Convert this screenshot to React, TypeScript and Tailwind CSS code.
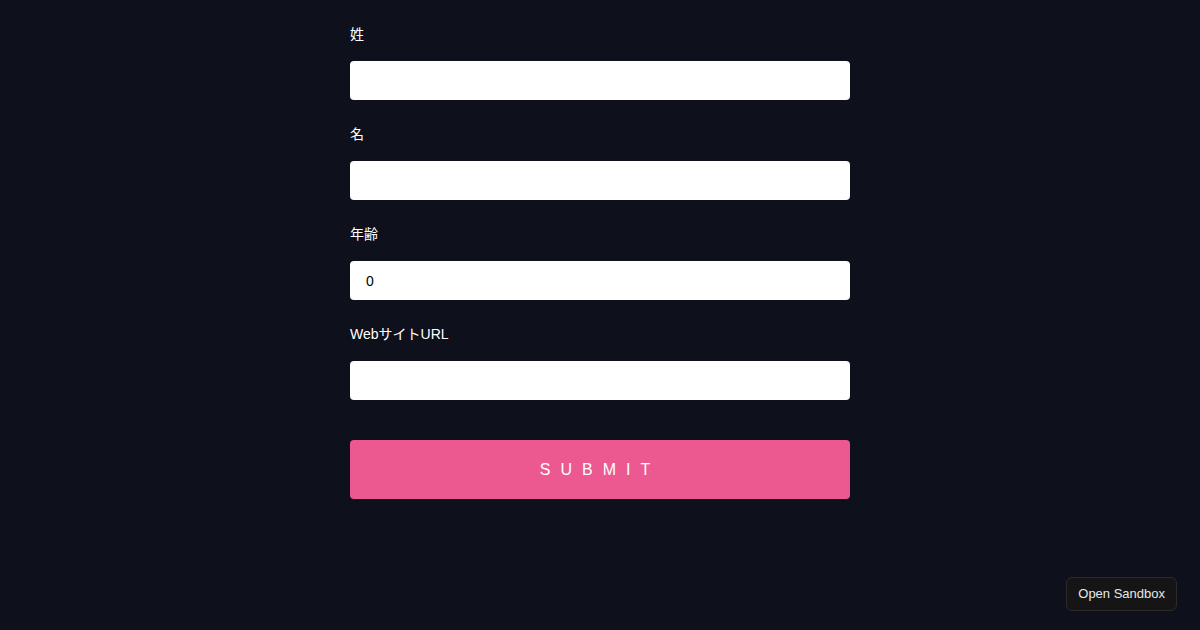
import React from "react";

const fields = [
  { label: "姓", value: "" },
  { label: "名", value: "" },
  { label: "年齢", value: "0" },
  { label: "WebサイトURL", value: "" },
];

export default function App() {
  return (
    <div
      className="relative min-h-[630px] w-full bg-[#0e101c] text-white"
      style={{ fontFamily: '"Liberation Sans", Arial, "Noto Sans CJK JP", sans-serif' }}
    >
      <form className="mx-auto flex w-[500px] flex-col" onSubmit={(e) => e.preventDefault()}>
        {fields.map((f) => (
          <div key={f.label} className="flex flex-col">
            <label className="mt-[20px] mb-[13px] block h-[28px] text-[14px] leading-[28px] text-white">
              {f.label}
            </label>
            <input
              defaultValue={f.value}
              className="box-border h-[39px] w-full rounded-[4px] border-0 bg-white pl-[16px] pr-[15px] text-[14px] text-black outline-none"
            />
          </div>
        ))}
        <button
          type="submit"
          className="mt-[40px] h-[59px] w-full rounded-[4px] bg-[#ec5990] text-[16px] font-thin uppercase tracking-[10px] text-white"
        >
          Submit
        </button>
      </form>
      <button className="absolute right-[23px] bottom-[19px] h-[34px] rounded-[6px] border border-[#2f2a2a] bg-[#151515] px-[11px] text-[13px] text-[#e8e8e8]">
        Open Sandbox
      </button>
    </div>
  );
}
